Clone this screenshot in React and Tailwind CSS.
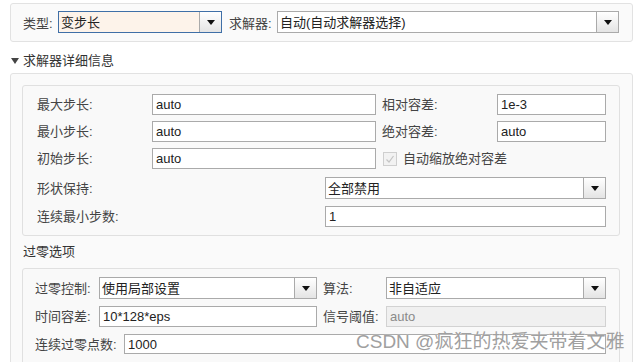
const FONT = "font-['Liberation_Sans','Noto_Sans_CJK_SC',sans-serif]"

function Arrow() {
  return (
    <svg width="8" height="5" viewBox="0 0 8 5">
      <path d="M0 0h8L4 5z" fill="#111" />
    </svg>
  )
}

function Select({ value, width, focused, h = 'h-[22px]' }) {
  return (
    <div
      className={`flex ${h} shrink-0 border ${focused ? 'border-[#3f6fa7] bg-[#fdf3ea]' : 'border-[#aaaaaa] bg-white'}`}
      style={{ width }}
    >
      <div className="flex-1 flex items-center pl-[2px] text-[13px] text-[#222] leading-none">{value}</div>
      <div className="w-[22px] flex items-center justify-center border-l border-[#aaaaaa] bg-gradient-to-b from-white to-[#e4e4e4]">
        <Arrow />
      </div>
    </div>
  )
}

function Input({ value, width, disabled, h = 'h-[21px]' }) {
  return (
    <div
      className={`flex items-center ${h} shrink-0 border pl-[3px] text-[13px] leading-none ${disabled ? 'border-[#d2d2d2] bg-[#f0f0f0] text-[#8a8a8a]' : 'border-[#aaaaaa] bg-white text-[#222]'}`}
      style={{ width }}
    >
      {value}
    </div>
  )
}

function Label({ children, width, className = '' }) {
  return (
    <div className={`shrink-0 text-[13px] text-[#444] leading-none ${className}`} style={{ width }}>
      {children}
    </div>
  )
}

export default function App() {
  return (
    <div className={`relative w-[642px] h-[362px] overflow-hidden bg-white ${FONT}`}>
      {/* 类型 / 求解器 */}
      <div className="ml-[10px] mt-[3px] w-[623px] h-[39px] rounded-[3px] border border-[#e2e2e2] bg-[#fafafa] pt-[7px] pl-[12px] flex items-start">
        <Label width={35} className="mt-[6px]">类型:</Label>
        <Select value="变步长" width={164} focused />
        <Label width={48} className="ml-[7px] mt-[6px]">求解器:</Label>
        <Select value="自动(自动求解器选择)" width={342} />
      </div>

      {/* 求解器详细信息 */}
      <div className="flex items-center h-[31px] pl-[11px] pt-[6px]">
        <svg width="8" height="6" viewBox="0 0 8 6" className="mr-[4px]">
          <path d="M0 0h8L4 6z" fill="#444" />
        </svg>
        <span className="text-[13px] text-[#333]">求解器详细信息</span>
      </div>

      <div className="ml-[10px] w-[623px] h-[300px] rounded-[3px] border border-[#e2e2e2] bg-[#fafafa] pt-[11px] pl-[11px]">
        <div className="w-[598px] h-[151px] rounded-[3px] border border-[#e0e0e0] bg-[#f9f9f9] pt-[8px] pl-[14px] flex flex-col">
          <div className="flex items-center">
            <Label width={115}>最大步长:</Label>
            <Input value="auto" width={224} />
            <Label width={115} className="ml-[6px]">相对容差:</Label>
            <Input value="1e-3" width={109} />
          </div>
          <div className="flex items-center mt-[6px]">
            <Label width={115}>最小步长:</Label>
            <Input value="auto" width={224} />
            <Label width={115} className="ml-[6px]">绝对容差:</Label>
            <Input value="auto" width={109} />
          </div>
          <div className="flex items-center mt-[6px]">
            <Label width={115}>初始步长:</Label>
            <Input value="auto" width={224} />
            <div className="ml-[7px] w-[14px] h-[14px] border border-[#cfcfcf] bg-[#f2f2f2] flex items-center justify-center">
              <svg width="10" height="10" viewBox="0 0 10 10">
                <path d="M1.5 5.5l2.5 2.5 4.5-6" stroke="#c4c4c4" strokeWidth="1.2" fill="none" />
              </svg>
            </div>
            <span className="ml-[6px] text-[13px] text-[#444]">自动缩放绝对容差</span>
          </div>
          <div className="flex items-center mt-[8px]">
            <Label width={288}>形状保持:</Label>
            <Select value="全部禁用" width={281} />
          </div>
          <div className="flex items-center mt-[7px]">
            <Label width={288}>连续最小步数:</Label>
            <Input value="1" width={281} />
          </div>
        </div>

        <div className="h-[32px] flex items-center pl-[1px] text-[13px] text-[#333]">过零选项</div>

        <div className="w-[598px] h-[100px] rounded-[3px] border border-[#e0e0e0] bg-[#f9f9f9] pt-[8px] pl-[12px] flex flex-col">
          <div className="flex items-center">
            <Label width={64}>过零控制:</Label>
            <Select value="使用局部设置" width={218} />
            <Label width={63} className="ml-[6px]">算法:</Label>
            <Select value="非自适应" width={220} />
          </div>
          <div className="flex items-center mt-[7px]">
            <Label width={64}>时间容差:</Label>
            <Input value="10*128*eps" width={218} />
            <Label width={63} className="ml-[6px]">信号阈值:</Label>
            <Input value="auto" width={220} disabled />
          </div>
          <div className="flex items-center mt-[7px]">
            <Label width={89}>连续过零点数:</Label>
            <Input value="1000" width={482} h="h-[20px]" />
          </div>
        </div>
      </div>

      {/* watermark */}
      <div className="absolute left-[356px] top-[328px] text-[19px] text-[#a0a0a0] font-['Liberation_Sans','Noto_Sans_CJK_SC',sans-serif] [text-shadow:0_0_1px_#fff] whitespace-nowrap">
        CSDN @疯狂的热爱夹带着文雅
      </div>
    </div>
  )
}
